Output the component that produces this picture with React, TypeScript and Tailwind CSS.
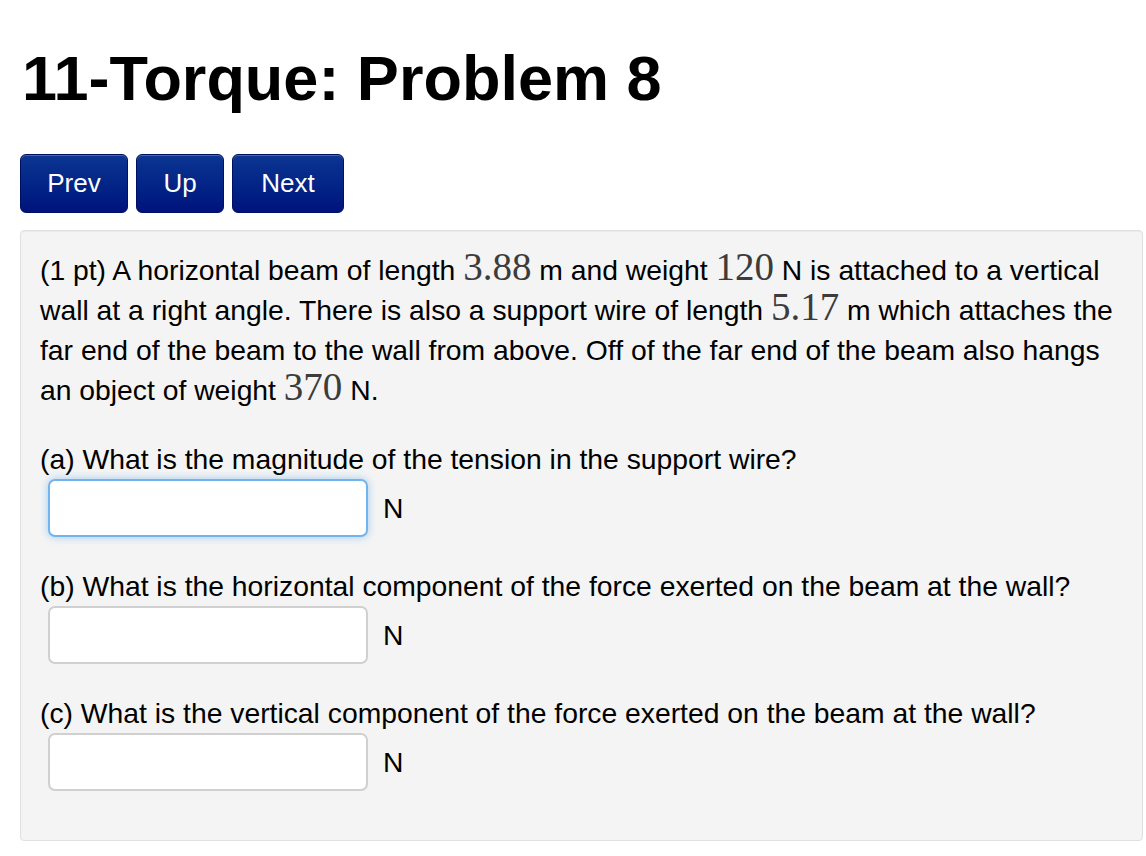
import React from "react";

const sans = { fontFamily: '"Liberation Sans", Arial, Helvetica, sans-serif' };

function M({ children }: { children: React.ReactNode }) {
  return (
    <span className="font-['Liberation_Serif',serif] text-[39px] leading-[34px] text-[#3c3c3c]">
      {children}
    </span>
  );
}

function NavButton({ label, width }: { label: string; width: string }) {
  return (
    <button
      className={`${width} h-[59px] rounded-[6px] border border-[#001060] bg-gradient-to-b from-[#0d3592] to-[#00127c] text-[26px] text-white shadow-[inset_0_1px_0_rgba(255,255,255,0.25)]`}
    >
      {label}
    </button>
  );
}

function Question({ text, focused }: { text: string; focused?: boolean }) {
  return (
    <div className="mt-[29px]">
      <div className="leading-[40px]">{text}</div>
      <div className="flex items-center">
        <input
          type="text"
          className={
            focused
              ? "ml-2 h-[58px] w-[320px] rounded-[7px] border-2 border-[#72b5ee] bg-white outline-none shadow-[0_0_8px_rgba(102,175,233,0.6)]"
              : "ml-2 h-[58px] w-[320px] rounded-[7px] border-2 border-[#d0d0d0] bg-white outline-none"
          }
        />
        <span className="ml-[15px]">N</span>
      </div>
    </div>
  );
}

export default function App() {
  return (
    <div className="min-h-[856px] bg-white pl-5 pr-[3px] pt-[47px] text-black" style={sans}>
      <h1 className="pl-[2px] text-[63px] font-bold leading-[62px]">11-Torque: Problem 8</h1>

      <div className="mt-[45px] flex gap-2">
        <NavButton label="Prev" width="w-[108px]" />
        <NavButton label="Up" width="w-[88px]" />
        <NavButton label="Next" width="w-[112px]" />
      </div>

      <div className="mt-[17px] rounded-[4px] border border-[#e0e0e0] bg-[#f4f4f4] px-[19px] pb-[49px] pt-[19px] text-[28.3px] shadow-[inset_0_1px_1px_rgba(0,0,0,0.04)]">
        <p className="leading-[40px]">
          (1 pt) A horizontal beam of length <M>3.88</M> m and weight <M>120</M> N is attached to a vertical
          wall at a right angle. There is also a support wire of length <M>5.17</M> m which attaches the far
          end of the beam to the wall from above. Off of the far end of the beam also hangs an object of
          weight <M>370</M> N.
        </p>

        <Question text="(a) What is the magnitude of the tension in the support wire?" focused />
        <Question text="(b) What is the horizontal component of the force exerted on the beam at the wall?" />
        <Question text="(c) What is the vertical component of the force exerted on the beam at the wall?" />
      </div>
    </div>
  );
}
